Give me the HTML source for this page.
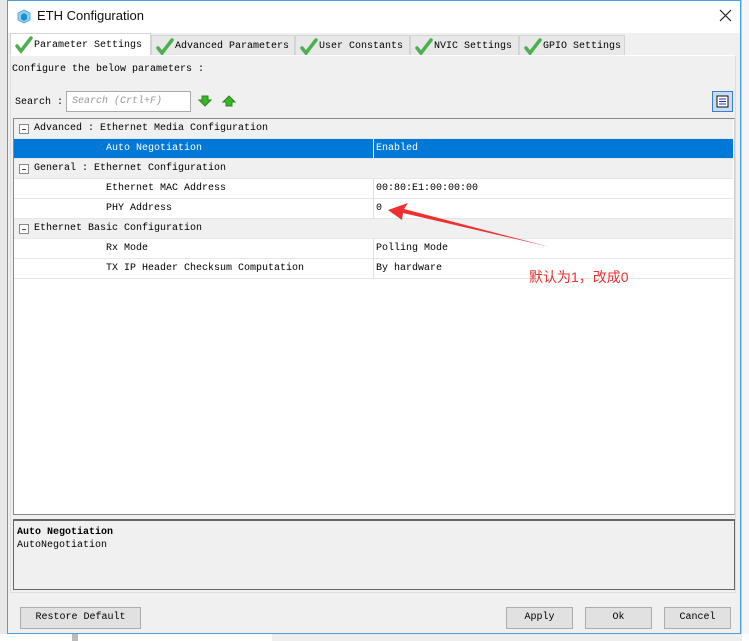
<!DOCTYPE html>
<html><head><meta charset="utf-8"><style>
*{margin:0;padding:0;box-sizing:border-box}
body{width:749px;height:641px;overflow:hidden;background:#e8e8e8;position:relative;font-family:"Liberation Mono",monospace;font-size:10px;color:#000}
.a{position:absolute}
.dlg{left:7px;top:0;width:734px;height:634px;background:#f0f0f0;border:1px solid #4a9fe0}
.title{left:0;top:0;width:732px;height:32px;background:#fff}
.tab{top:34px;height:20px;background:#e8e8e8;border:1px solid #d4d4d4;border-bottom:none;padding:5px 0 0 23px;white-space:nowrap}
.tab svg{position:absolute;left:3px;top:1px}
.row{position:absolute;left:0;width:719px;height:20px;border-bottom:1px solid #e6e6e6;background:#fff;line-height:19px;white-space:nowrap}
.grp{background:#f0f0f0}
.sel{background:#0078d7;color:#fff}
.c1{position:absolute;left:92px}
.c2{position:absolute;left:359px;border-left:1px solid #e0e0e0;padding-left:2px;height:20px}
.box{position:absolute;left:5px;top:5px;width:10px;height:10px;border:1px solid #888;background:#fff}
.box:after{content:"";position:absolute;left:2px;top:4px;width:4px;height:1px;background:#444}
.gt{position:absolute;left:20px}
.btn{top:606px;height:22px;border:1px solid #adadad;background:#e1e1e1;text-align:center;line-height:20px;white-space:nowrap}
</style></head><body>
<div class="a" style="left:741px;top:0;width:8px;height:641px;background:#f5f5f5;border-left:1px solid #ccc"></div>
<div class="a" style="left:0;top:634px;width:749px;height:7px;background:#fff"></div>
<div class="a" style="left:72px;top:634px;width:6px;height:7px;background:#bbb"></div>
<div class="a" style="left:272px;top:634px;width:470px;height:7px;background:#eee"></div>
<div class="a dlg">
 <div class="a title">
  <svg class="a" style="left:9px;top:8px" width="14" height="15" viewBox="0 0 14 15"><path d="M7 1 L13 4 L13 11 L7 14 L1 11 L1 4Z" fill="#8fd0f0" stroke="#5ab0e0"/><path d="M7 4 L10 6 L10 10 L7 12 L4 10 L4 6Z" fill="#1e90d0"/></svg>
  <div class="a" style="left:29px;top:7px;font-family:'Liberation Sans',sans-serif;font-size:13px;color:#111">ETH Configuration</div>
  <svg class="a" style="left:711px;top:8px" width="13" height="13"><path d="M1 1L12 12M12 1L1 12" stroke="#222" stroke-width="1.2"/></svg>
 </div>
 <div class="a tab" style="left:2px;top:32px;height:23px;width:141px;background:#fff;padding-top:6px">Parameter Settings<svg width="20" height="20"><path d="M3 11 L7 16 L17 3" stroke="#4caf50" stroke-width="3.5" fill="none" stroke-linecap="round"/></svg></div>
 <div class="a tab" style="left:143px;width:144px">Advanced Parameters<svg width="20" height="20"><path d="M3 11 L7 16 L17 3" stroke="#4caf50" stroke-width="3.5" fill="none" stroke-linecap="round"/></svg></div>
 <div class="a tab" style="left:287px;width:115px">User Constants<svg width="20" height="20"><path d="M3 11 L7 16 L17 3" stroke="#4caf50" stroke-width="3.5" fill="none" stroke-linecap="round"/></svg></div>
 <div class="a tab" style="left:402px;width:109px">NVIC Settings<svg width="20" height="20"><path d="M3 11 L7 16 L17 3" stroke="#4caf50" stroke-width="3.5" fill="none" stroke-linecap="round"/></svg></div>
 <div class="a tab" style="left:511px;width:106px">GPIO Settings<svg width="20" height="20"><path d="M3 11 L7 16 L17 3" stroke="#4caf50" stroke-width="3.5" fill="none" stroke-linecap="round"/></svg></div>
 <div class="a" style="left:2px;top:54px;width:726px;height:538px;border:1px solid #ddd;border-top-color:#fff"></div>
 <div class="a" style="left:4px;top:63px">Configure the below parameters :</div>
 <div class="a" style="left:7px;top:96px">Search :</div>
 <div class="a" style="left:58px;top:90px;width:125px;height:21px;border:1px solid #aaa;background:#fff;color:#999;font-style:italic;padding:4px 0 0 5px">Search (Crtl+F)</div>
 <svg class="a" style="left:190px;top:94px" width="14" height="12"><path d="M4 1H10V5H13L7 11L1 5H4Z" fill="#3cb32c" stroke="#2a8a20"/></svg>
 <svg class="a" style="left:214px;top:94px" width="14" height="12"><path d="M4 11H10V7H13L7 1L1 7H4Z" fill="#3cb32c" stroke="#2a8a20"/></svg>
 <div class="a" style="left:704px;top:90px;width:21px;height:21px;border:1px solid #3a7bd5;background:#c8dcf4"><svg width="19" height="19"><rect x="4" y="4" width="11" height="11" fill="#fff" stroke="#111"/><path d="M6 7H13M6 9.5H13M6 12H13" stroke="#1a3aa0"/></svg></div>
 <div class="a" style="left:5px;top:117px;width:722px;height:397px;border:1px solid #888;border-right-color:#ccc;background:#fff;overflow:hidden">
  <div class="row grp" style="top:0"><span class="box"></span><span class="gt">Advanced : Ethernet Media Configuration</span></div>
  <div class="row sel" style="top:20px"><span class="c1">Auto Negotiation</span><span class="c2" style="border-color:#fff">Enabled</span></div>
  <div class="row grp" style="top:40px"><span class="box"></span><span class="gt">General : Ethernet Configuration</span></div>
  <div class="row" style="top:60px"><span class="c1">Ethernet MAC Address</span><span class="c2">00:80:E1:00:00:00</span></div>
  <div class="row" style="top:80px"><span class="c1">PHY Address</span><span class="c2">0</span></div>
  <div class="row grp" style="top:100px"><span class="box"></span><span class="gt">Ethernet Basic Configuration</span></div>
  <div class="row" style="top:120px"><span class="c1">Rx Mode</span><span class="c2">Polling Mode</span></div>
  <div class="row" style="top:140px"><span class="c1">TX IP Header Checksum Computation</span><span class="c2">By hardware</span></div>
 </div>
 <div class="a" style="left:5px;top:518px;width:722px;height:71px;border:1px solid #666;border-top-width:2px;background:#f0f0f0;padding:6px 0 0 3px"><b>Auto Negotiation</b><br><span style="line-height:16px">AutoNegotiation</span></div>
 <div class="a btn" style="left:12px;width:121px">Restore Default</div>
 <div class="a btn" style="left:498px;width:67px">Apply</div>
 <div class="a btn" style="left:577px;width:67px">Ok</div>
 <div class="a btn" style="left:656px;width:67px">Cancel</div>
</div>
<svg class="a" style="left:380px;top:200px" width="180" height="50"><path d="M8 10 L28 3 L24 9 L170 47 L23 13 L22 20Z" fill="#f03030"/></svg>
<div class="a" style="left:529px;top:267px;font-family:'Liberation Sans','Noto Sans CJK SC',sans-serif;font-size:14px;color:#f03030">默认为1，改成0</div>
</body></html>
